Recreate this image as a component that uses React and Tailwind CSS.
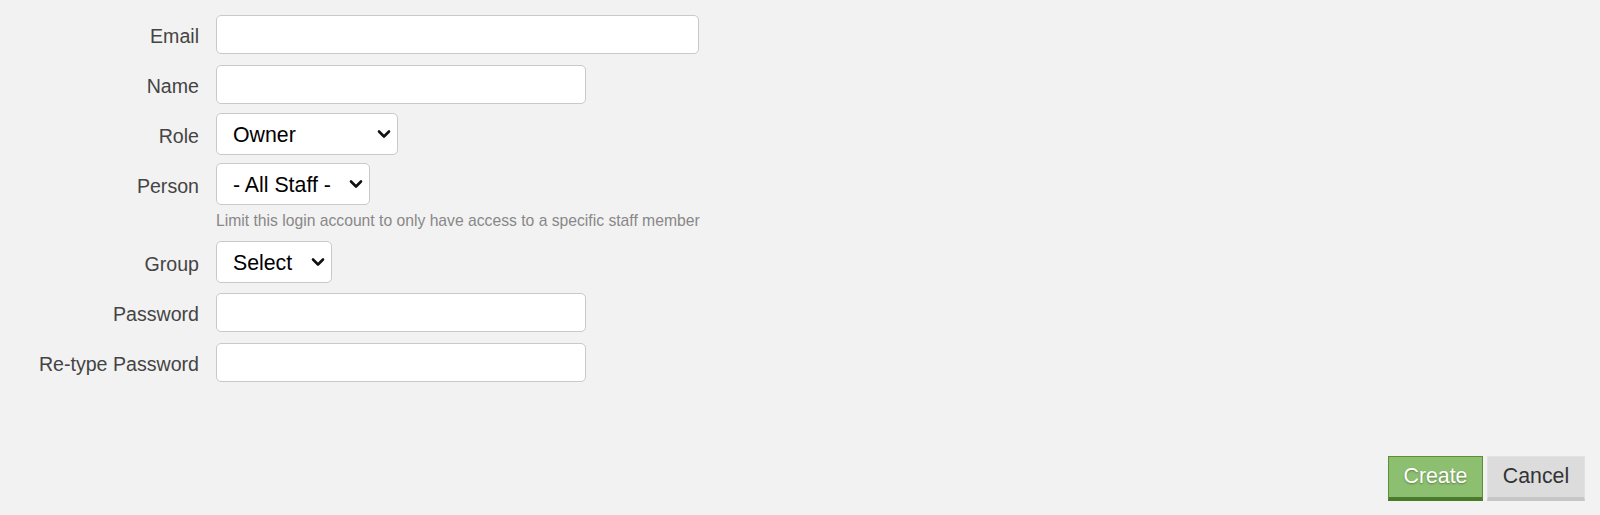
import React, { useState } from "react";

const font = { fontFamily: '"Liberation Sans", Arial, sans-serif' };

function Chevron() {
  return (
    <svg
      className="pointer-events-none absolute right-[7px] top-1/2 -translate-y-1/2 w-[14px] h-[9px]"
      viewBox="0 0 14 9"
      fill="none"
      stroke="#111"
      strokeWidth="2.6"
      strokeLinecap="round"
      strokeLinejoin="round"
    >
      <path d="M2 2l5 5 5-5" />
    </svg>
  );
}

function Row({ label, children }) {
  return (
    <div className="flex items-center h-[50px]">
      <label className="w-[199px] pt-[5px] text-right text-[19.6px] text-[#444] leading-none">
        {label}
      </label>
      <div className="ml-[17px]">{children}</div>
    </div>
  );
}

function TextInput({ width, type = "text" }) {
  return (
    <input
      type={type}
      className={`${width} block h-[39px] bg-white border border-[#c9c9c9] rounded-[5px] px-2 text-[18px] outline-none`}
    />
  );
}

function Select({ width, value, options, onChange }) {
  return (
    <div className={`relative ${width}`}>
      <select
        value={value}
        onChange={(e) => onChange(e.target.value)}
        className="block w-full h-[42px] appearance-none bg-white border border-[#c9c9c9] rounded-[5px] pl-4 pr-6 pt-[3px] text-[21.3px] text-black outline-none"
        style={font}
      >
        {options.map((o) => (
          <option key={o} value={o}>
            {o}
          </option>
        ))}
      </select>
      <Chevron />
    </div>
  );
}

export default function App() {
  const [role, setRole] = useState("Owner");
  const [person, setPerson] = useState("- All Staff -");
  const [group, setGroup] = useState("Select");

  return (
    <div
      className="h-[515px] bg-[#f2f2f2] flex flex-col overflow-hidden"
      style={font}
    >
      <div className="pt-[9px]">
        <Row label="Email">
          <TextInput width="w-[483px]" type="email" />
        </Row>
        <Row label="Name">
          <TextInput width="w-[370px]" />
        </Row>
        <Row label="Role">
          <Select
            width="w-[182px]"
            value={role}
            onChange={setRole}
            options={["Owner", "Admin", "Staff"]}
          />
        </Row>
        <Row label="Person">
          <Select
            width="w-[154px]"
            value={person}
            onChange={setPerson}
            options={["- All Staff -"]}
          />
        </Row>
        <div className="h-[28px] pl-[216px] pt-[3px] text-[15.7px] leading-[18px] text-[#888]">
          Limit this login account to only have access to a specific staff member
        </div>
        <Row label="Group">
          <Select
            width="w-[116px]"
            value={group}
            onChange={setGroup}
            options={["Select"]}
          />
        </Row>
        <Row label="Password">
          <TextInput width="w-[370px]" type="password" />
        </Row>
        <Row label="Re-type Password">
          <TextInput width="w-[370px]" type="password" />
        </Row>
      </div>

      <div className="mt-auto flex justify-end gap-[4px] pr-[15px] pb-[14px]">
        <button
          className="w-[95px] h-[45px] bg-[#8dbf70] border border-[#5a8f32] border-b-[4px] border-b-[#4b7a2a] text-white text-[21.3px] leading-none"
          style={{ textShadow: "0 1px 2px rgba(0,0,0,0.35)" }}
        >
          Create
        </button>
        <button className="w-[98px] h-[45px] bg-[#dcdcdc] border border-[#e2e2e2] border-b-[4px] border-b-[#c6c6c6] text-[#333] text-[21.3px] leading-none">
          Cancel
        </button>
      </div>
    </div>
  );
}
